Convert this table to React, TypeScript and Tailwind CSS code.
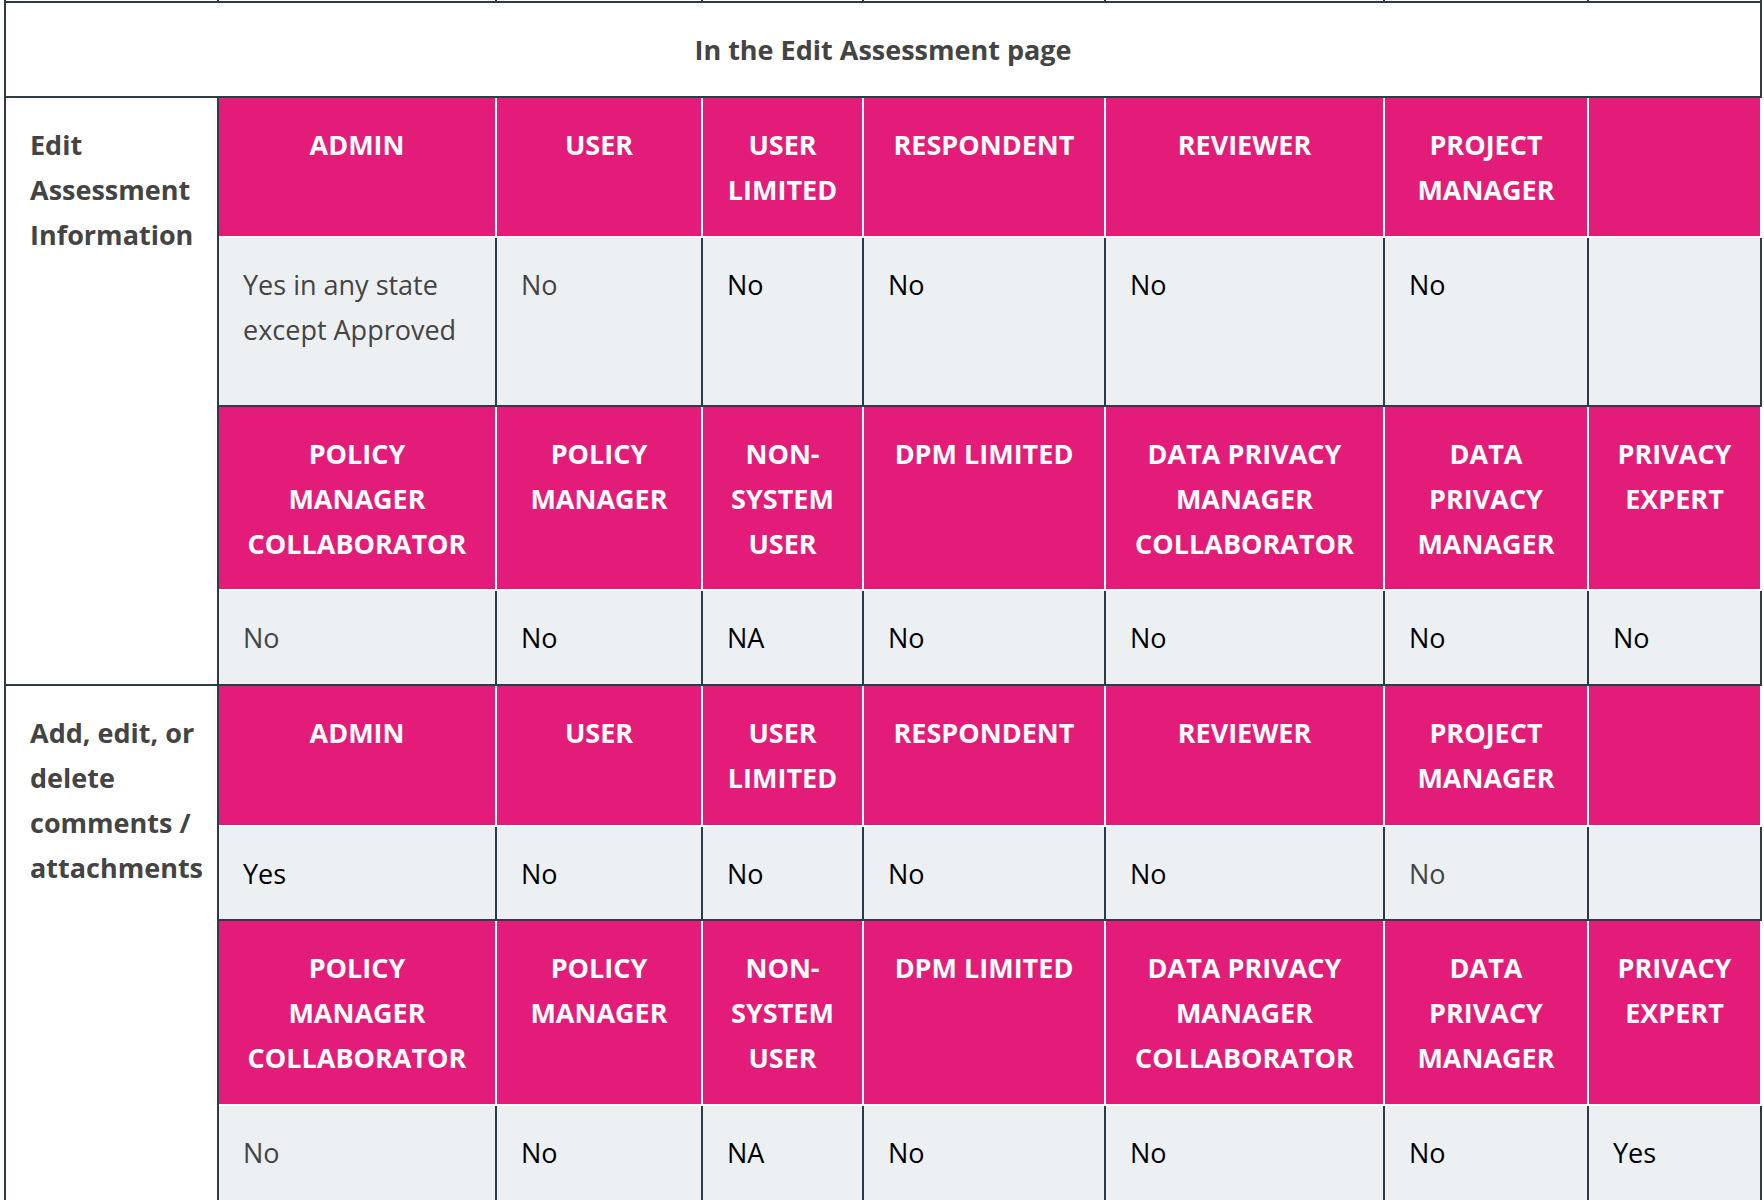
import React from "react";

type DCell = { t: string[]; g?: boolean };

const W = ["w-[276px]", "w-[206px]", "w-[161px]", "w-[242px]", "w-[279px]", "w-[204px]", "w-[175px]"];
const HB = [
  "",
  "border-l-2 border-white",
  "border-l-2 border-white",
  "border-l-2 border-white",
  "border-l-2 border-white",
  "border-l-2 border-white",
  "border-x-2 border-white",
];
const DB = [
  "",
  "border-l-2 border-[#2d3b45]",
  "border-l-2 border-[#2d3b45]",
  "border-l-2 border-[#2d3b45]",
  "border-l-2 border-[#2d3b45]",
  "border-l-2 border-[#2d3b45]",
  "border-x-2 border-[#2d3b45]",
];

const headA: string[][] = [["ADMIN"], ["USER"], ["USER", "LIMITED"], ["RESPONDENT"], ["REVIEWER"], ["PROJECT", "MANAGER"], []];
const headB: string[][] = [
  ["POLICY", "MANAGER", "COLLABORATOR"],
  ["POLICY", "MANAGER"],
  ["NON-", "SYSTEM", "USER"],
  ["DPM LIMITED"],
  ["DATA PRIVACY", "MANAGER", "COLLABORATOR"],
  ["DATA", "PRIVACY", "MANAGER"],
  ["PRIVACY", "EXPERT"],
];

const data1: DCell[] = [
  { t: ["Yes in any state", "except Approved"], g: true },
  { t: ["No"], g: true },
  { t: ["No"] },
  { t: ["No"] },
  { t: ["No"] },
  { t: ["No"] },
  { t: [] },
];
const data2: DCell[] = [
  { t: ["No"], g: true },
  { t: ["No"] },
  { t: ["NA"] },
  { t: ["No"] },
  { t: ["No"] },
  { t: ["No"] },
  { t: ["No"] },
];
const data3: DCell[] = [
  { t: ["Yes"] },
  { t: ["No"] },
  { t: ["No"] },
  { t: ["No"] },
  { t: ["No"] },
  { t: ["No"], g: true },
  { t: [] },
];
const data4: DCell[] = [
  { t: ["No"], g: true },
  { t: ["No"] },
  { t: ["NA"] },
  { t: ["No"] },
  { t: ["No"] },
  { t: ["No"] },
  { t: ["Yes"] },
];

function Lines({ t }: { t: string[] }) {
  return (
    <>
      {t.map((l, i) => (
        <span key={i} className="block whitespace-nowrap">
          {l}
        </span>
      ))}
    </>
  );
}

function HeaderRow({ cells, h }: { cells: string[][]; h: string }) {
  return (
    <div className={`flex border-b-2 border-white ${h}`}>
      {cells.map((c, i) => (
        <div
          key={i}
          className={`${W[i]} ${HB[i]} shrink-0 bg-[#e31c79] px-[16px] pt-[24px] text-center text-white font-bold`}
        >
          <Lines t={c} />
        </div>
      ))}
    </div>
  );
}

function DataRow({ cells, h, border }: { cells: DCell[]; h: string; border?: boolean }) {
  return (
    <div className={`flex ${border ? "border-b-2 border-[#2d3b45]" : ""} ${h}`}>
      {cells.map((c, i) => (
        <div
          key={i}
          className={`${W[i]} ${DB[i]} shrink-0 bg-[#edf0f3] px-[24px] pt-[24px] ${c.g ? "text-[#444444]" : "text-black"}`}
        >
          <Lines t={c.t} />
        </div>
      ))}
    </div>
  );
}

function Group({
  label,
  d1,
  d2,
  h1,
  h2,
  h3,
  h4,
}: {
  label: string[];
  d1: DCell[];
  d2: DCell[];
  h1: string;
  h2: string;
  h3: string;
  h4: string;
}) {
  return (
    <div className="flex border-b-2 border-[#2d3b45]">
      <div className="w-[215px] shrink-0 border-x-2 border-[#2d3b45] bg-white pl-[24px] pt-[24px] font-bold text-[#444444]">
        <Lines t={label} />
      </div>
      <div className="flex w-[1543px] flex-col">
        <HeaderRow cells={headA} h={h1} />
        <DataRow cells={d1} h={h2} border />
        <HeaderRow cells={headB} h={h3} />
        <DataRow cells={d2} h={h4} />
      </div>
    </div>
  );
}

export default function App() {
  return (
    <div className="min-h-[1200px] w-full bg-white font-['Open_Sans',sans-serif] text-[27px] leading-[45px]">
      <div className="ml-[4px] w-[1758px]">
        <div className="flex h-[1px]">
          <div className="w-[215px] shrink-0 border-x-2 border-[#2d3b45]" />
          {W.map((w, i) => (
            <div key={i} className={`${w} ${DB[i]} shrink-0`} />
          ))}
        </div>
        <div className="flex h-[97px] items-center justify-center border-2 border-[#2d3b45] font-bold text-[#444444]">
          In the Edit Assessment page
        </div>
        <Group
          label={["Edit", "Assessment", "Information"]}
          d1={data1}
          d2={data2}
          h1="h-[140px]"
          h2="h-[169px]"
          h3="h-[184px]"
          h4="h-[93px]"
        />
        <Group
          label={["Add, edit, or", "delete", "comments /", "attachments"]}
          d1={data3}
          d2={data4}
          h1="h-[141px]"
          h2="h-[94px]"
          h3="h-[185px]"
          h4="h-[94px]"
        />
      </div>
    </div>
  );
}
